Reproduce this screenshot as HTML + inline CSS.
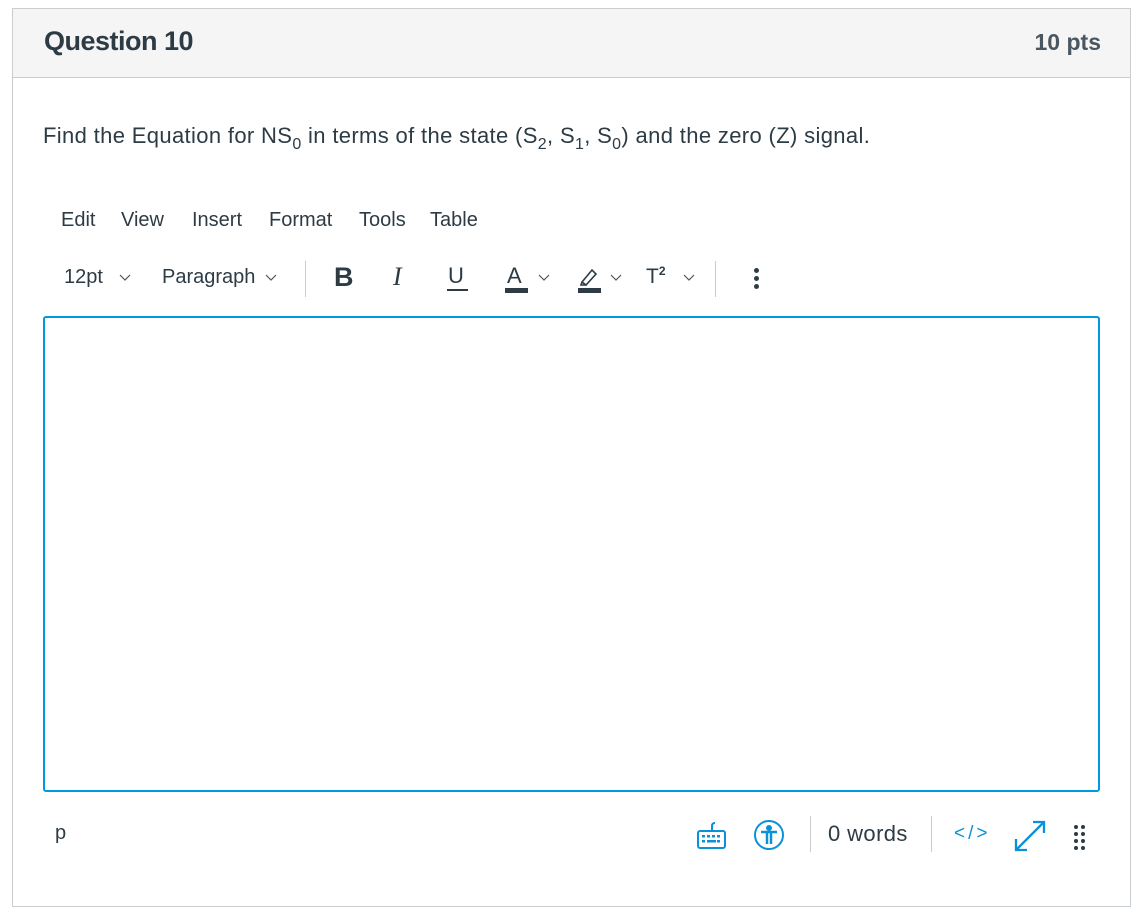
<!DOCTYPE html>
<html><head><style>
body{margin:0;background:#fff;font-family:"Liberation Sans",sans-serif;color:#2d3b45;}
.card{position:absolute;left:12px;top:8px;width:1117px;height:897px;border:1px solid #c7cdd1;}
.hdr{height:68px;background:#f5f5f5;border-bottom:1px solid #c7cdd1;position:relative;}
.t{position:absolute;left:31px;top:17px;font-size:27px;font-weight:bold;letter-spacing:-0.5px}
.pts{position:absolute;right:29px;top:20px;font-size:23px;font-weight:bold;color:#4a5660}
.abs{position:absolute;white-space:nowrap}
sub{font-size:16px;vertical-align:-6px;line-height:0}
.sep{position:absolute;width:1px;background:#c7cdd1}
.ed{position:absolute;left:43px;top:316px;width:1053px;height:472px;border:2px solid #0099e0;border-radius:3px}
.m{position:absolute;top:209px;font-size:20px}
</style></head><body>
<div class="card"><div class="hdr"><div class="t">Question 10</div><div class="pts">10 pts</div></div></div>
<div class="abs" style="left:43px;top:123px;font-size:22px;letter-spacing:0.35px">Find the Equation for NS<sub>0</sub> in terms of the state (S<sub>2</sub>, S<sub>1</sub>, S<sub>0</sub>) and the zero (Z) signal.</div>
<div class="m" style="left:61px">Edit</div><div class="m" style="left:121px">View</div><div class="m" style="left:192px">Insert</div><div class="m" style="left:269px">Format</div><div class="m" style="left:359px">Tools</div><div class="m" style="left:430px">Table</div>
<svg width="0" height="0" style="position:absolute"><defs><path id="cv" d="M1 1 L6 6 L11 1" fill="none" stroke="#555" stroke-width="1.2"/></defs></svg>
<div class="abs" style="left:64px;top:266px;font-size:20px">12pt</div>
<svg class="abs" style="left:119px;top:274px" width="12" height="8"><use href="#cv"/></svg>
<div class="abs" style="left:162px;top:266px;font-size:20px">Paragraph</div>
<svg class="abs" style="left:265px;top:274px" width="12" height="8"><use href="#cv"/></svg>
<div class="sep" style="left:305px;top:261px;height:36px"></div>
<div class="abs" style="left:334px;top:262px;font-size:27px;font-weight:bold">B</div>
<div class="abs" style="left:393px;top:262px;font-size:26px;font-family:'Liberation Serif',serif;font-style:italic">I</div>
<div class="abs" style="left:448px;top:263px;font-size:22px">U</div>
<div class="abs" style="left:447px;top:289px;width:21px;height:2px;background:#2d3b45"></div>
<div class="abs" style="left:507px;top:263px;font-size:22px">A</div>
<svg class="abs" style="left:538px;top:274px" width="12" height="8"><use href="#cv"/></svg>
<div class="abs" style="left:505px;top:288px;width:23px;height:5px;background:#2d3b45"></div>
<svg class="abs" style="left:578px;top:265px" width="24" height="28"><path d="M4 17 L14 5 L18 9 L8 20 Z M4 17 L3 20 L8 20" fill="none" stroke="#2d3b45" stroke-width="1.6"/><rect x="0" y="23" width="23" height="5" fill="#2d3b45"/></svg>
<svg class="abs" style="left:610px;top:274px" width="12" height="8"><use href="#cv"/></svg>
<div class="abs" style="left:646px;top:264px;font-size:21px">T<sup style="font-size:12px;font-weight:bold">2</sup></div>
<svg class="abs" style="left:683px;top:274px" width="12" height="8"><use href="#cv"/></svg>
<div class="sep" style="left:715px;top:261px;height:36px"></div>
<div class="abs" style="left:754px;top:268px;width:5px;height:5px;border-radius:3px;background:#2d3b45;box-shadow:0 8px 0 #2d3b45,0 16px 0 #2d3b45"></div>
<div class="ed"></div>
<div class="abs" style="left:55px;top:822px;font-size:20px">p</div>
<svg class="abs" style="left:696px;top:820px" width="32" height="32" fill="none" stroke="#0a91d8" stroke-width="2"><rect x="2" y="11" width="27" height="17" rx="2"/><path d="M16 11 V6 Q16 3 19 3"/><g fill="#0a91d8" stroke="none"><rect x="6" y="15" width="3" height="2.5"/><rect x="11" y="15" width="3" height="2.5"/><rect x="16" y="15" width="3" height="2.5"/><rect x="21" y="15" width="3" height="2.5"/><rect x="6" y="20" width="3" height="2.5"/><rect x="11" y="20" width="9" height="2.5"/><rect x="21" y="20" width="3" height="2.5"/></g></svg>
<svg class="abs" style="left:753px;top:819px" width="32" height="32" fill="none" stroke="#0a91d8" stroke-width="2"><circle cx="16" cy="16" r="14"/><circle cx="16" cy="9" r="2" fill="#0a91d8"/><path d="M8 13 H24 M14 13 V25 M18 13 V25" stroke-width="2.5"/></svg>
<div class="sep" style="left:810px;top:816px;height:36px"></div>
<div class="abs" style="left:828px;top:821px;font-size:22px;letter-spacing:0.4px">0 words</div>
<div class="sep" style="left:931px;top:816px;height:36px"></div>
<div class="abs" style="left:954px;top:823px;font-size:19px;color:#0a91d8;letter-spacing:3px">&lt;/&gt;</div>
<svg class="abs" style="left:1013px;top:819px" width="34" height="34" fill="none" stroke="#0a91d8" stroke-width="2.3"><path d="M3 31 L31 3 M20 3 H31 V14 M3 20 V31 H14"/></svg>
<div class="abs" style="left:1074px;top:825px;width:4px;height:4px;border-radius:2px;background:#2d3b45;box-shadow:7px 0 #2d3b45,0 7px #2d3b45,7px 7px #2d3b45,0 14px #2d3b45,7px 14px #2d3b45,0 21px #2d3b45,7px 21px #2d3b45"></div>
</body></html>
